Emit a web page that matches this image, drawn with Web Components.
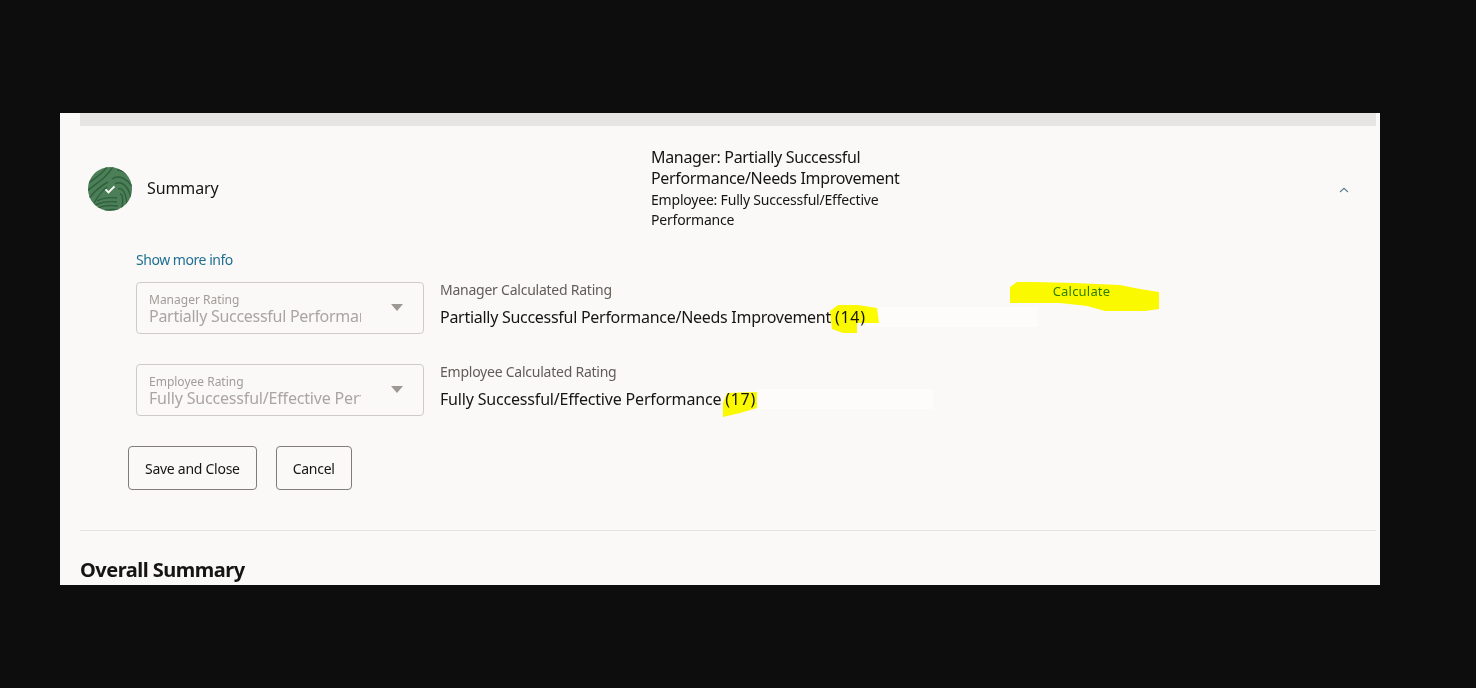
<!DOCTYPE html>
<html lang="en">
<head>
<meta charset="utf-8">
<title>Summary</title>
<style>
  html, body { margin: 0; height: 100%; background: #0d0d0d; }
  body { font-family: "Noto Sans", "Open Sans", sans-serif; overflow: hidden; }
</style>
</head>
<body>
<review-panel>
  <summary-header title-text="Summary">
    <span slot="manager">Manager: Partially Successful Performance/Needs Improvement</span>
    <span slot="employee">Employee: Fully Successful/Effective Performance</span>
  </summary-header>
  <a-link>Show more info</a-link>
  <rating-row label="Manager Rating" value="Partially Successful Performance/Needs Improvement"
    calc-label="Manager Calculated Rating" calc-value="Partially Successful Performance/Needs Improvement" score="(14)"
    tracking="-0.28" patch="172" action="Calculate"></rating-row>
  <rating-row label="Employee Rating" value="Fully Successful/Effective Performance"
    calc-label="Employee Calculated Rating" calc-value="Fully Successful/Effective Performance" score="(17)"
    tracking="-0.18" patch="177"></rating-row>
  <button-bar>
    <ghost-button>Save and Close</ghost-button>
    <ghost-button>Cancel</ghost-button>
  </button-bar>
  <section-title>Overall Summary</section-title>
  <marker-strokes slot="overlay"></marker-strokes>
</review-panel>

<script>
// small helper so each component just declares its css + markup
function shadow(el, html) {
  el.attachShadow({ mode: 'open' });
  el.shadowRoot.innerHTML = html;
}

class ReviewPanel extends HTMLElement {
  connectedCallback() {
    shadow(this, `
      <style>
        :host {
          display: block;
          position: relative;
          box-sizing: border-box;
          width: 1320px;
          height: 472px;
          margin: 113px 0 0 60px;
          background: #fbf9f8;
          overflow: hidden;
          color: #161513;
        }
        .strip { height: 13px; margin: 0 4px 0 20px; background: #e6e5e3; }
      </style>
      <div class="strip"></div>
      <slot></slot>
      <slot name="overlay"></slot>
    `);
  }
}

class SummaryHeader extends HTMLElement {
  connectedCallback() {
    shadow(this, `
      <style>
        :host { display: flex; align-items: center; height: 124px; padding-left: 28px; }
        .avatar { width: 44px; height: 44px; flex: none; margin-top: 1px; }
        .name { width: 504px; margin-left: 15px; font-size: 16px; letter-spacing: -0.1px; }
        .info { width: 270px; }
        .manager { font-size: 16px; line-height: 21px; letter-spacing: -0.33px; }
        .employee { font-size: 14px; line-height: 20px; margin-top: 1px; letter-spacing: -0.2px; }
        .chevron { width: 12px; height: 8px; margin: 3px 0 0 417px; }
      </style>
      <svg class="avatar" viewBox="0 0 44 44">
        <defs><clipPath id="c"><circle cx="22" cy="22" r="22"/></clipPath></defs>
        <g clip-path="url(#c)">
          <rect width="44" height="44" fill="#4c7f58"/>
          <g fill="none" stroke="#2f5f3c" stroke-width="1.4">
            <path d="M-2 18C6 11 15 8 20 -2M-2 25C8 16 19 11 26 -2M1 31C8 23 14 18 20 15M6 36C10 29 14 24 19 20"/>
            <path d="M13 -2C10 3 5 7 -2 12M7 -2C5 1 2 3 -2 6"/>
            <path d="M24 12C31 7 40 12 46 22M29 3C36 3 42 9 46 15M27 17C33 13 40 19 43 30M30 22C35 20 38 27 39 37M32 27C35 27 35 33 34 42"/>
            <path d="M9 34C15 31 21 30 29 31M7 38C14 35 21 34 29 35M10 41C16 38 22 38 30 39M14 44C20 42 24 42 32 43"/>
          </g>
          <path d="M17.5 22.3l3 3 6-6" fill="none" stroke="#fdfdfb" stroke-width="1.9"/>
        </g>
      </svg>
      <div class="name">${this.getAttribute('title-text')}</div>
      <div class="info">
        <div class="manager"><slot name="manager"></slot></div>
        <div class="employee"><slot name="employee"></slot></div>
      </div>
      <svg class="chevron" viewBox="0 0 12 8">
        <path d="M2 6l4-3.6L10 6" fill="none" stroke="#5f7f92" stroke-width="1.2"/>
      </svg>
    `);
  }
}

class ALink extends HTMLElement {
  connectedCallback() {
    shadow(this, `
      <style>
        :host { display: block; margin: 0 0 12px 76px; height: 20px; line-height: 20px;
                font-size: 14px; letter-spacing: -0.46px; color: #1e6f92; }
      </style>
      <slot></slot>
    `);
  }
}

class SelectField extends HTMLElement {
  connectedCallback() {
    const tracking = this.getAttribute('tracking') || '-0.28';
    shadow(this, `
      <style>
        :host {
          display: flex; align-items: center; box-sizing: border-box;
          width: 288px; height: 52px; flex: none;
          padding: 0 20px 0 12px;
          border: 1px solid #cfcbc7; border-radius: 4px;
        }
        .text { width: 212px; margin-top: 4px; overflow: hidden; white-space: nowrap; }
        .label { font-size: 12px; line-height: 12px; color: #a19c97; }
        .value { font-size: 16px; line-height: 21px; letter-spacing: ${tracking}px; color: #aaa5a1; }
        svg { width: 12px; height: 7px; margin: -2px 0 0 auto; }
      </style>
      <div class="text">
        <div class="label">${this.getAttribute('label')}</div>
        <div class="value">${this.getAttribute('value')}</div>
      </div>
      <svg viewBox="0 0 12 7"><path d="M0 0h12L6 7z" fill="#9c9893"/></svg>
    `);
  }
}

class RatingRow extends HTMLElement {
  connectedCallback() {
    const action = this.getAttribute('action');
    const tracking = this.getAttribute('tracking');
    shadow(this, `
      <style>
        :host { display: flex; margin: 0 0 30px 76px; height: 52px; }
        .calc { width: 570px; margin-left: 16px; flex: none; }
        .label { font-size: 14px; line-height: 16px; letter-spacing: -0.24px; color: #615c57; }
        .line { display: flex; margin-top: 9px; font-size: 16px; line-height: 20px; letter-spacing: ${tracking}px; white-space: nowrap; }
        .score { margin-left: 4px; letter-spacing: 0.7px; }
        .patch { flex: none; background: #fdfcfb; height: 20px; }
        .action { box-sizing: border-box; width: 149px; height: 16px; margin-top: 1px; padding-right: 6px;
                  text-align: center; font-size: 13px; line-height: 16px; letter-spacing: 0.2px; color: #2f7d10; }
      </style>
      <select-field label="${this.getAttribute('label')}" value="${this.getAttribute('value')}" tracking="${tracking}"></select-field>
      <div class="calc">
        <div class="label">${this.getAttribute('calc-label')}</div>
        <div class="line">
          <span>${this.getAttribute('calc-value')}</span>
          <span class="score">${this.getAttribute('score')}</span>
          <span class="patch" style="width:${this.getAttribute('patch')}px"></span>
        </div>
      </div>
      ${action ? `<div class="action">${action}</div>` : ''}
    `);
  }
}

class ButtonBar extends HTMLElement {
  connectedCallback() {
    shadow(this, `
      <style>
        :host { display: flex; gap: 19px; margin-left: 68px; padding-bottom: 40px; }
      </style>
      <slot></slot>
    `);
  }
}

class GhostButton extends HTMLElement {
  connectedCallback() {
    shadow(this, `
      <style>
        :host {
          display: flex; align-items: center; box-sizing: border-box; height: 44px;
          padding: 0 16px; border: 1px solid #7f7c79; border-radius: 4px;
          font-size: 14px; letter-spacing: -0.27px; color: #161513;
        }
      </style>
      <slot></slot>
    `);
  }
}

class SectionTitle extends HTMLElement {
  connectedCallback() {
    shadow(this, `
      <style>
        :host {
          display: block; margin: 0 4px 0 20px; padding-top: 26px;
          border-top: 1px solid #e6e4e1;
          font-size: 20px; font-weight: 700; line-height: 26px; letter-spacing: -0.5px; color: #161513;
        }
      </style>
      <slot></slot>
    `);
  }
}

// the yellow marker scribbles that someone drew on top of the screenshot
class MarkerStrokes extends HTMLElement {
  connectedCallback() {
    shadow(this, `
      <style>
        :host { position: absolute; left: 0; top: 0; width: 1320px; height: 472px;
                mix-blend-mode: multiply; pointer-events: none; }
        svg { display: block; }
      </style>
      <svg width="1320" height="472" viewBox="60 113 1320 472">
        <g fill="#ffff00">
          <path d="M1010 287L1017 282H1033L1075 283L1120 285L1140 289L1159 292V309L1145 311H1105L1087 306L1060 303H1010Z"/>
          <path d="M830 311L838 305H858L877 308L879 323H857V333H843L832 329Z"/>
          <path d="M723 417V403L727 393L757 392V408L740 413Z"/>
        </g>
      </svg>
    `);
  }
}

customElements.define('review-panel', ReviewPanel);
customElements.define('summary-header', SummaryHeader);
customElements.define('a-link', ALink);
customElements.define('select-field', SelectField);
customElements.define('rating-row', RatingRow);
customElements.define('button-bar', ButtonBar);
customElements.define('ghost-button', GhostButton);
customElements.define('section-title', SectionTitle);
customElements.define('marker-strokes', MarkerStrokes);
</script>
</body>
</html>
